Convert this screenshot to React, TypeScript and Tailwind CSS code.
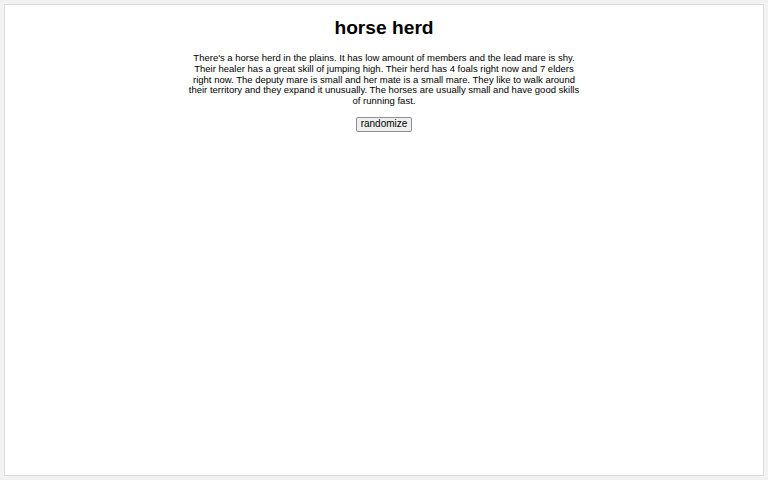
import { useState } from 'react';

const texts = [
  "There's a horse herd in the plains. It has low amount of members and the lead mare is shy. Their healer has a great skill of jumping high. Their herd has 4 foals right now and 7 elders right now. The deputy mare is small and her mate is a small mare. They like to walk around their territory and they expand it unusually. The horses are usually small and have good skills of running fast.",
];

export default function App() {
  const [text] = useState(texts[0]);

  return (
    <div className="h-screen w-full bg-[#f2f2f2] p-[4px] font-['Liberation_Sans',Arial,sans-serif]">
      <div className="h-full bg-white border border-[#dcdcdc] flex flex-col items-center pt-[10px]">
        <h1 className="text-[19.2px] font-bold text-black leading-[26px]">horse herd</h1>
        <p className="mt-[12px] w-[400px] text-center text-[9.5px] leading-[10.75px] text-black">
          {text}
        </p>
        <button
          type="button"
          className="mt-[10px] px-[4px] h-[15px] text-[10px] leading-none text-black bg-[#efefef] border border-[#8f8f8f] rounded-[2px]"
        >
          randomize
        </button>
      </div>
    </div>
  );
}
